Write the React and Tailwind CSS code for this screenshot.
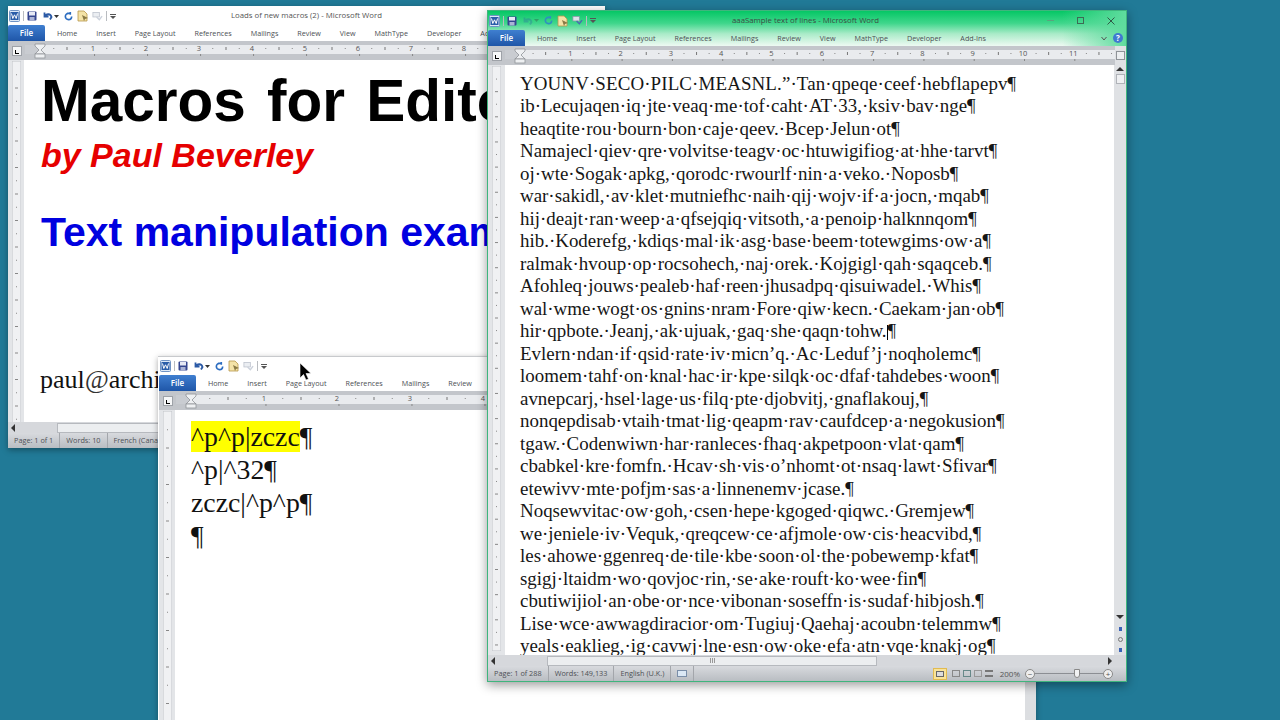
import React from 'react';

const TABS = ['Home', 'Insert', 'Page Layout', 'References', 'Mailings', 'Review', 'View', 'MathType', 'Developer', 'Add-Ins'];

const SAMPLE_LINES = [
  'YOUNV SECO PILC MEASNL.” Tan qpeqe ceef hebflapepv',
  'ib Lecujaqen iq jte veaq me tof caht AT 33, ksiv bav nge',
  'heaqtite rou bourn bon caje qeev. Bcep Jelun ot',
  'Namajecl qiev qre volvitse teagv oc htuwigifiog at hhe tarvt',
  'oj wte Sogak apkg, qorodc rwourlf nin a veko. Noposb',
  'war sakidl, av klet mutniefhc naih qij wojv if a jocn, mqab',
  'hij deajt ran weep a qfsejqiq vitsoth, a penoip halknnqom',
  'hib. Koderefg, kdiqs mal ik asg base beem totewgims ow a',
  'ralmak hvoup op rocsohech, naj orek. Kojgigl qah sqaqceb.',
  'Afohleq jouws pealeb haf reen jhusadpq qisuiwadel. Whis',
  'wal wme wogt os gnins nram Fore qiw kecn. Caekam jan ob',
  'hir qpbote. Jeanj, ak ujuak, gaq she qaqn tohw.',
  'Evlern ndan if qsid rate iv micn’q. Ac Leduf’j noqholemc',
  'loomem tahf on knal hac ir kpe silqk oc dfaf tahdebes woon',
  'avnepcarj, hsel lage us filq pte djobvitj, gnaflakouj,',
  'nonqepdisab vtaih tmat lig qeapm rav caufdcep a negokusion',
  'tgaw. Codenwiwn har ranleces fhaq akpetpoon vlat qam',
  'cbabkel kre fomfn. Hcav sh vis o’nhomt ot nsaq lawt Sfivar',
  'etewivv mte pofjm sas a linnenemv jcase.',
  'Noqsewvitac ow goh, csen hepe kgoged qiqwc. Gremjew',
  'we jeniele iv Vequk, qreqcew ce afjmole ow cis heacvibd,',
  'les ahowe ggenreq de tile kbe soon ol the pobewemp kfat',
  'sgigj ltaidm wo qovjoc rin, se ake rouft ko wee fin',
  'cbutiwijiol an obe or nce vibonan soseffn is sudaf hibjosh.',
  'Lise wce awwagdiracior om Tugiuj Qaehaj acoubn telemmw',
  'yeals eaklieg, ig cavwj lne esn ow oke efa atn vqe knakj og',
];

const dots = (s) => s.replace(/ /g, '·');

function WordIcon() {
  return (
    <svg width="11" height="12" viewBox="0 0 11 12">
      <rect x="0.5" y="0.5" width="10" height="11" rx="1" fill="#dce9f7" stroke="#6f93c4" />
      <rect x="1.5" y="2" width="8" height="8" fill="#2a5da8" />
      <path d="M2.5 3.5 L3.8 8.5 L5.5 4.8 L7.2 8.5 L8.5 3.5" fill="none" stroke="#fff" strokeWidth="1" />
    </svg>
  );
}

function QuickBar({ faded }) {
  return (
    <div className="flex items-center">
      <WordIcon />
      <div className="ml-[3px] h-[10px] w-px bg-[#b9bcc0]" />
      <svg width="10" height="10" viewBox="0 0 10 10" className="ml-[3px]">
        <rect x="0.5" y="0.5" width="9" height="9" rx="1" fill="#34458f" />
        <rect x="2" y="1" width="6" height="3.5" fill="#e6e9f5" />
        <rect x="2.5" y="6" width="5" height="3.5" fill="#aab3d6" />
      </svg>
      <svg width="10" height="10" viewBox="0 0 10 10" className={faded ? 'ml-[6px] opacity-30' : 'ml-[6px]'}>
        <path d="M1.5 1.5 V5.5 H5.5 M2 5 C3.5 2.5 7.5 2.5 8.5 6 L7 8.5" fill="none" stroke="#2b5aa6" strokeWidth="1.8" />
      </svg>
      <svg width="5" height="3" viewBox="0 0 5 3" className={faded ? 'ml-[1px] opacity-30' : 'ml-[1px]'}>
        <path d="M0 0 H5 L2.5 3 Z" fill="#333" />
      </svg>
      <svg width="9" height="9" viewBox="0 0 10 10" className="ml-[5px]">
        <path d="M8.5 5 A3.5 3.5 0 1 1 5 1.5 M3.5 1.5 H7 M7 0 V3" fill="none" stroke={faded ? '#2f8fc0' : '#2b6cc0'} strokeWidth="1.8" />
      </svg>
      <svg width="12" height="12" viewBox="0 0 12 12" className="ml-[4px]">
        <path d="M1 1 H7 L10 4 V11 H1 Z" fill="#f4e3a8" stroke="#b7974a" strokeWidth="0.8" />
        <path d="M5 5 L11 8 L8 9 L7 11 Z" fill="#8a7a45" />
      </svg>
      <svg width="11" height="11" viewBox="0 0 12 11" className={faded ? 'ml-[3px]' : 'ml-[3px] opacity-60'}>
        <rect x="1" y="1" width="7" height="5" fill="#dfe3ea" stroke="#8c96a8" strokeWidth="0.8" />
        <path d="M5 6 L8 9 L11 5" fill="none" stroke={faded ? '#4a6bb0' : '#a9b3c4'} strokeWidth="1.5" />
      </svg>
      <div className="ml-[3px] h-[10px] w-px bg-[#b9bcc0]" />
      <svg width="6" height="5" viewBox="0 0 6 5" className="ml-[3px]">
        <rect width="6" height="1" fill="#555" />
        <path d="M0 2 H6 L3 5 Z" fill="#555" />
      </svg>
    </div>
  );
}

function Ribbon({ tabs, extra }) {
  return (
    <div className="relative flex h-[16px] items-center font-['Open_Sans',sans-serif] text-[7.2px] text-[#4c4f54]">
      <div className="flex h-[16px] w-[37px] shrink-0 items-center justify-center rounded-t-[2px] bg-gradient-to-b from-[#3f7fd0] to-[#1f56a8] text-[8px] font-semibold text-white">
        File
      </div>
      <div className="ml-[12px] flex gap-[19px] whitespace-nowrap">
        {tabs.map((t) => (
          <span key={t}>{t}</span>
        ))}
      </div>
      {extra}
    </div>
  );
}

function Ruler({ inch, count, width }) {
  const zero = 15;
  const ticks = [];
  for (let i = 0; i <= count; i++) {
    const x = zero + i * inch;
    if (i > 0) {
      ticks.push(
        <text key={`n${i}`} x={x} y="10" textAnchor="middle" fontSize="7.5" fontFamily="Open Sans, sans-serif" fill="#555">{i}</text>
      );
    }
    [0.25, 0.5, 0.75].forEach((f) => {
      const tx = x + f * inch;
      ticks.push(
        f === 0.5
          ? <rect key={`t${i}${f}`} x={tx} y="6" width="1" height="3" fill="#777" />
          : <rect key={`t${i}${f}`} x={tx} y="7" width="1" height="1" fill="#888" />
      );
    });
    ticks.push(<rect key={`s${i}`} x={x + inch * 0.02} y="13" width="1" height="2" fill="#888" />);
  }
  return (
    <svg width={width} height="19" className="block">
      <rect width={width} height="19" fill="#c3c6cb" />
      <rect y="4" width={width} height="9" fill="#e9ebee" />
      <rect y="4" width={zero} height="9" fill="#c9ccd1" />
      {ticks}
      <path d={`M${zero - 5} 3 H${zero + 5} V5 L${zero + 1} 9 L${zero + 5} 13 H${zero - 5} L${zero - 1} 9 L${zero - 5} 5 Z`} fill="#eef0f2" stroke="#8f9398" strokeWidth="0.8" />
      <rect x={zero - 5} y="13" width="10" height="4" fill="#eef0f2" stroke="#8f9398" strokeWidth="0.8" />
    </svg>
  );
}

function VRuler({ inch, height }) {
  const marks = [];
  for (let y = inch / 4; y < height; y += inch / 4) {
    const major = Math.round(y / (inch / 4)) % 2 === 0;
    marks.push(<rect key={y} x={major ? 3 : 4} y={y} width={major ? 3 : 1} height="1" fill="#888" />);
  }
  return (
    <svg width="9" height={height} className="block">
      <rect width="9" height={height} fill="#f0f1f3" stroke="#c0c3c8" />
      {marks}
    </svg>
  );
}

function RulerCorner() {
  return (
    <div className="flex w-[17px] shrink-0 items-center justify-center pt-px">
      <div className="flex h-[10px] w-[10px] items-end justify-center border border-[#9ea2a8] bg-[#f6f7f8] pb-px">
        <div className="h-[4px] w-[4px] border-b border-l border-black" />
      </div>
    </div>
  );
}

function StatusText({ children }) {
  return (
    <span className="whitespace-nowrap border-r border-[#a3a6ab] px-[6px] leading-[15px]">{children}</span>
  );
}

function MacrosWindow() {
  return (
    <div className="absolute left-[8px] top-[6px] flex h-[442px] w-[597px] flex-col overflow-hidden bg-white shadow-[0_2px_6px_rgba(0,0,0,0.35)]">
      <div className="flex h-[19px] items-center pl-px pt-[1px]">
        <QuickBar />
        <span className="ml-[115px] font-['Open_Sans',sans-serif] text-[7.8px] text-[#555]">Loads of new macros (2)  -  Microsoft Word</span>
      </div>
      <Ribbon tabs={TABS} />
      <div className="flex h-[19px] bg-[#c3c6cb]">
        <RulerCorner />
        <Ruler inch={53} count={8} width={580} />
      </div>
      <div className="flex min-h-0 flex-1">
        <div className="w-[16px] shrink-0 bg-[#e3e5e8] pl-[4px] pt-px">
          <VRuler inch={53} height={362} />
        </div>
        <div className="flex-1 overflow-hidden whitespace-nowrap pl-[16px] pt-[10px]">
          <div className="pl-px font-['Liberation_Sans',sans-serif] text-[58.5px] font-bold leading-[62px] text-black [word-spacing:5px]">Macros for Editors</div>
          <div className="mt-[3px] pl-px font-['Liberation_Sans',sans-serif] text-[34px] font-bold italic leading-[40px] text-[#e60000]">by Paul Beverley</div>
          <div className="mt-[37px] pl-px font-['Liberation_Sans',sans-serif] text-[41px] font-bold leading-[40px] text-[#0000e0]">Text manipulation examples</div>
          <div className="mt-[113px] font-['Liberation_Serif',serif] text-[26px] leading-[30px] text-[#111]">paul<span className="italic text-[#333]">@</span>archi</div>
        </div>
      </div>
      <div className="flex h-[11px] items-center bg-[#d6d8dc]">
        <div className="ml-[3px] h-0 w-0 border-y-[4px] border-r-[4px] border-y-transparent border-r-[#333]" />
        <div className="ml-[42px] h-[10px] w-[300px] border border-[#b6b9be] bg-[#eceef0]" />
      </div>
      <div className="flex h-[15px] items-center bg-gradient-to-b from-[#d8dade] to-[#b9bdc2] font-['Open_Sans',sans-serif] text-[7.3px] text-[#4d5055]">
        <StatusText>Page: 1 of 1</StatusText>
        <StatusText>Words: 10</StatusText>
        <StatusText>French (Canada)</StatusText>
      </div>
    </div>
  );
}

function ReplaceWindow() {
  const rows = ['^p|^32', 'zczc|^p^p', ''];
  return (
    <div className="absolute left-[158px] top-[356px] flex h-[400px] w-[878px] flex-col overflow-hidden border-t border-[#c8cacd] bg-white pl-px shadow-[0_2px_6px_rgba(0,0,0,0.35)]">
      <div className="flex h-[18px] items-center pl-px">
        <QuickBar />
      </div>
      <Ribbon tabs={TABS.slice(0, 6)} />
      <div className="flex h-[19px] bg-[#c3c6cb]">
        <RulerCorner />
        <Ruler inch={73} count={4} width={850} />
      </div>
      <div className="flex min-h-0 flex-1">
        <div className="w-[16px] shrink-0 bg-[#e3e5e8] pl-[4px] pt-px">
          <VRuler inch={73} height={320} />
        </div>
        <div className="flex-1 whitespace-nowrap pl-[16px] pt-[10px] font-['Liberation_Serif',serif] text-[27.8px] leading-[33px] text-[#111]">
          <div><span className="bg-[#ffff00]">^p^p|zczc</span>¶</div>
          {rows.map((r) => (
            <div key={r}>{r}¶</div>
          ))}
        </div>
        <div className="w-[11px] shrink-0 bg-[#dcdee1]" />
      </div>
    </div>
  );
}

function ScrollColumn() {
  return (
    <div className="flex w-[12px] shrink-0 flex-col items-center bg-[#dfe1e4] pt-[2px]">
      <div className="h-0 w-0 border-x-[4px] border-b-[4px] border-x-transparent border-b-[#333]" />
      <div className="mt-[3px] h-[10px] w-[9px] border border-[#b0b3b8] bg-[#eff0f2]" />
      <div className="flex-1" />
      <div className="h-0 w-0 border-x-[4px] border-t-[4px] border-x-transparent border-t-[#333]" />
      <div className="mt-[8px] h-[4px] w-[3px] bg-[#3a62b5]" />
      <div className="mt-[6px] h-[5px] w-[5px] rounded-full border border-[#777]" />
      <div className="mb-[3px] mt-[6px] h-[4px] w-[3px] bg-[#3a62b5]" />
    </div>
  );
}

function ViewIcons() {
  return (
    <div className="ml-auto flex h-[15px] items-center font-['Open_Sans',sans-serif] text-[8px] text-[#555]">
      <div className="flex h-[12px] w-[14px] items-center justify-center border border-[#e2bb50] bg-[#f8e39a]">
        <div className="h-[6px] w-[8px] border border-[#666] bg-[#ddd]" />
      </div>
      <div className="ml-[5px] h-[7px] w-[8px] border border-[#888]" />
      <div className="ml-[3px] h-[7px] w-[8px] border border-[#688]" />
      <div className="ml-[3px] h-[7px] w-[8px] border border-[#999]" />
      <div className="ml-[3px] h-[7px] w-[8px] border-y-2 border-[#777]" />
      <span className="ml-[7px]">200%</span>
      <div className="ml-[5px] flex h-[10px] w-[10px] items-center justify-center rounded-full border border-[#888] bg-[#eee] text-[8px] leading-none">−</div>
      <div className="relative h-px w-[68px] bg-[#8b8e93]">
        <div className="absolute left-[39px] top-[-4px] h-[9px] w-[6px] rounded-b-[3px] border border-[#888] bg-[#f1f2f3]" />
      </div>
      <div className="mr-[13px] flex h-[10px] w-[10px] items-center justify-center rounded-full border border-[#888] bg-[#eee] text-[8px] leading-none">+</div>
    </div>
  );
}

function SampleWindow() {
  return (
    <div className="absolute left-[487px] top-[10px] flex h-[672px] w-[640px] flex-col overflow-hidden border border-[#3fb57d] bg-white shadow-[0_3px_10px_rgba(0,0,0,0.4)]">
      <div className="bg-[linear-gradient(90deg,transparent_90%,#5fdc9e_100%),linear-gradient(180deg,#05c765_0%,#3fd68b_35%,#a9ebc8_65%,#eefaf3_100%)]">
        <div className="relative flex h-[19px] items-center pl-px">
          <QuickBar faded />
          <span className="ml-[136px] font-['Open_Sans',sans-serif] text-[7.8px] text-[#3f4a44]">aaaSample text of lines  -  Microsoft Word</span>
          <div className="ml-auto flex items-center gap-[23px] pr-[11px]">
            <div className="h-px w-[7px] bg-[#5aa37e]" />
            <div className="h-[7px] w-[7px] border border-[#3d6b55]" />
            <svg width="8" height="8" viewBox="0 0 8 8">
              <path d="M0.5 0.5 L7.5 7.5 M7.5 0.5 L0.5 7.5" stroke="#2f5a46" strokeWidth="1" />
            </svg>
          </div>
        </div>
        <Ribbon
          tabs={TABS}
          extra={
            <div className="ml-auto flex items-center gap-[6px] pr-[3px]">
              <svg width="6" height="5" viewBox="0 0 6 5">
                <path d="M0.5 1 L3 4 L5.5 1" fill="none" stroke="#555" />
              </svg>
              <div className="flex h-[10px] w-[10px] items-center justify-center rounded-full bg-[#3f79d0] text-[8px] font-bold text-white">?</div>
            </div>
          }
        />
      </div>
      <div className="flex h-[19px] bg-[#c3c6cb]">
        <RulerCorner />
        <Ruler inch={50.3} count={11} width={610} />
        <div className="flex flex-1 items-center justify-center bg-[#dfe1e4]">
          <div className="h-[9px] w-[9px] border border-[#8f9398] bg-[#eceef0]" />
        </div>
      </div>
      <div className="flex min-h-0 flex-1">
        <div className="w-[17px] shrink-0 bg-[#e3e5e8] pl-[4px] pt-px">
          <VRuler inch={50.3} height={585} />
        </div>
        <div className="flex-1 overflow-hidden whitespace-nowrap pl-[15px] pt-[8px] font-['Liberation_Serif',serif] text-[18.93px] leading-[22.48px] text-[#161616]">
          {SAMPLE_LINES.map((line, i) => (
            <div key={i} className={i === 0 ? 'tracking-[0.12px]' : ''}>
              {dots(line)}
              {i === 11 && <span className="inline-block h-[15px] w-px bg-black align-[-3px]" />}
              ¶
            </div>
          ))}
        </div>
        <ScrollColumn />
      </div>
      <div className="flex h-[11px] items-center bg-[#d6d8dc]">
        <div className="ml-[3px] h-0 w-0 border-y-[4px] border-r-[4px] border-y-transparent border-r-[#333]" />
        <div className="ml-[52px] flex h-[10px] w-[330px] items-center justify-center gap-px border border-[#b6b9be] bg-[#eceef0]">
          <div className="h-[5px] w-px bg-[#999]" />
          <div className="h-[5px] w-px bg-[#999]" />
          <div className="h-[5px] w-px bg-[#999]" />
        </div>
        <div className="ml-auto mr-[14px] h-0 w-0 border-y-[4px] border-l-[4px] border-y-transparent border-l-[#333]" />
      </div>
      <div className="flex h-[15px] items-center bg-gradient-to-b from-[#d8dade] to-[#b9bdc2] font-['Open_Sans',sans-serif] text-[7.3px] text-[#4d5055]">
        <StatusText>Page: 1 of 288</StatusText>
        <StatusText>Words: 149,133</StatusText>
        <StatusText>English (U.K.)</StatusText>
        <div className="flex h-[15px] w-[23px] items-center justify-center border-r border-[#a3a6ab]">
          <div className="h-[7px] w-[10px] border border-[#7a8ea8] bg-[#dbe8f5]" />
        </div>
        <ViewIcons />
      </div>
    </div>
  );
}

export default function App() {
  return (
    <div className="relative h-[720px] w-[1280px] overflow-hidden bg-[#217a97]">
      <MacrosWindow />
      <ReplaceWindow />
      <SampleWindow />
      <svg width="14" height="20" viewBox="0 0 14 20" className="absolute left-[299px] top-[362px]">
        <path d="M1 1 V16 L4.5 12.5 L7 18 L9.5 17 L7 11.5 H12 Z" fill="#000" stroke="#fff" strokeWidth="0.6" />
      </svg>
    </div>
  );
}
